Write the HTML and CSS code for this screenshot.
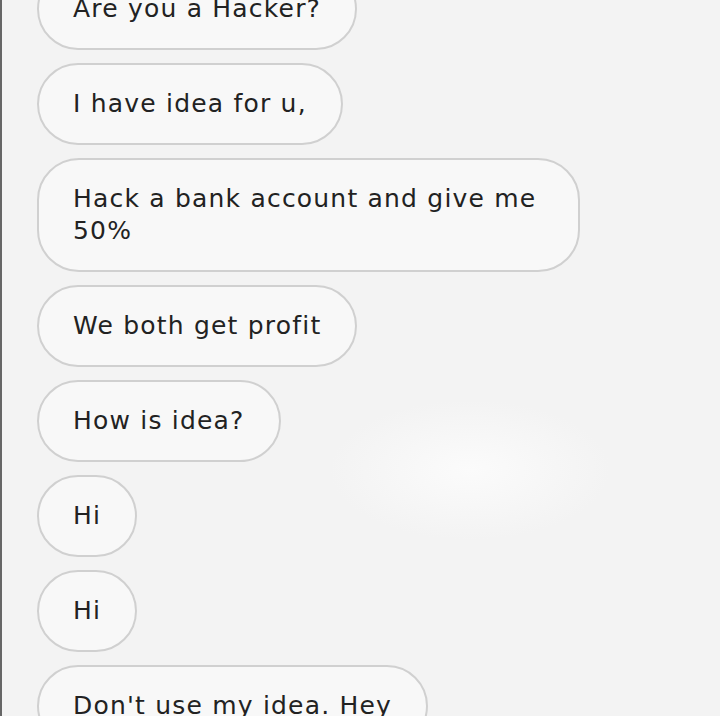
FILE: index.html
```html
<!DOCTYPE html>
<html lang="en">
<head>
  <meta charset="UTF-8">
  <meta name="viewport" content="width=device-width, initial-scale=1.0">
  <title>Chat</title>
  <link rel="stylesheet" href="styles.css">
</head>
<body>
  <div class="chat">
    <div class="bubble">Are you a Hacker?</div>
    <div class="bubble">I have idea for u,</div>
    <div class="bubble wide">Hack a bank account and give me<br>50%</div>
    <div class="bubble">We both get profit</div>
    <div class="bubble">How is idea?</div>
    <div class="bubble">Hi</div>
    <div class="bubble">Hi</div>
    <div class="bubble">Don't use my idea. Hey</div>
  </div>
</body>
</html>
```

FILE: styles.css
```css
/* chat screenshot */
body {
  margin: 0;
  height: 716px;
  overflow: hidden;
  font-family: "DejaVu Sans", Roboto, sans-serif;
  color: #222;
  background: radial-gradient(ellipse 140px 70px at 470px 470px, #fbfbfb, #f3f3f3);
  border-left: 2px solid #666;
}
.chat {
  display: flex;
  flex-direction: column;
  align-items: flex-start;
  gap: 13px;
  margin-top: -32px;
  padding-left: 35px;
}
.bubble {
  font-size: 25px;
  line-height: 32px;
  letter-spacing: 1.2px;
  padding: 23px 34px;
  border: 2px solid #d0d0d0;
  border-radius: 42px;
  background-color: #f8f8f8;
}
.bubble.wide {
  padding-right: 42px;
}
```
